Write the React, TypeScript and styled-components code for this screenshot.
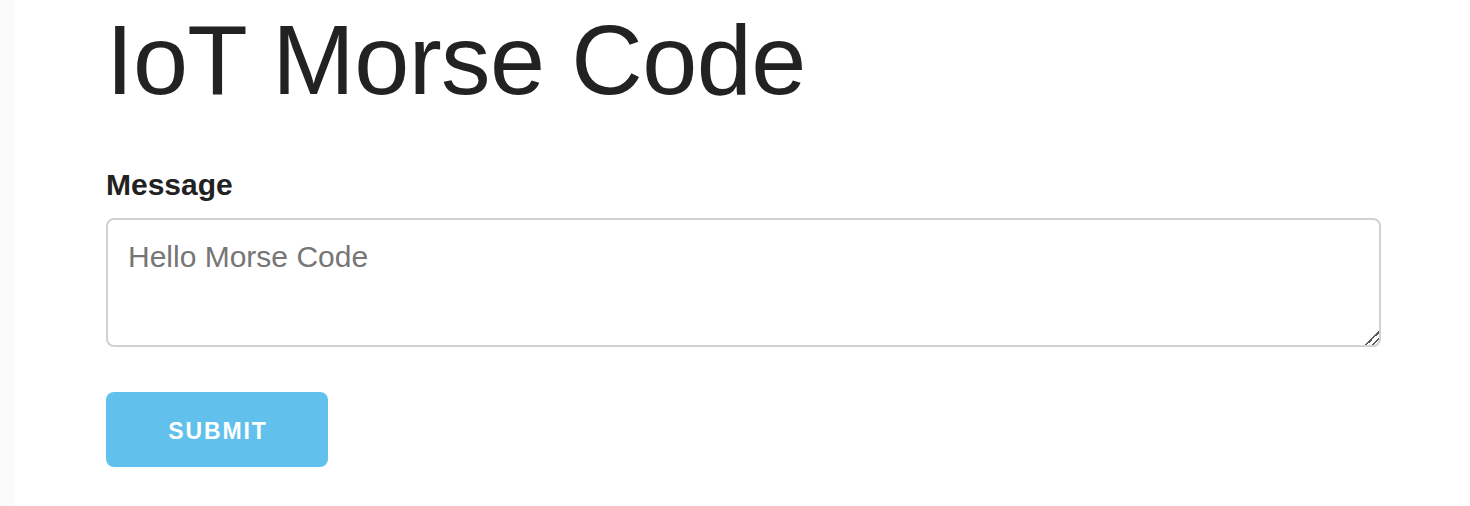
import React from "react";
import styled, { createGlobalStyle } from "styled-components";

const GlobalStyle = createGlobalStyle`
  html, body {
    margin: 0;
    padding: 0;
    background: #ffffff;
  }
  body {
    font-family: "Liberation Sans", Arial, "Helvetica Neue", Helvetica, sans-serif;
    color: #222222;
  }
  * { box-sizing: border-box; }
`;

const Page = styled.div`
  min-height: 506px;
  border-left: 15px solid #fbfbfb;
  padding: 10px 89px 0 91px;
`;

const Title = styled.h1`
  margin: 0;
  font-size: 99px;
  line-height: 100px;
  font-weight: 400;
  letter-spacing: -0.6px;
  color: #222222;
`;

const Form = styled.form`
  display: flex;
  flex-direction: column;
  align-items: flex-start;
  margin-top: 57px;
`;

const Label = styled.label`
  display: block;
  font-size: 30px;
  line-height: 36px;
  font-weight: 700;
  color: #222222;
  margin-bottom: 15px;
`;

const MessageArea = styled.textarea`
  display: block;
  width: 100%;
  height: 129px;
  padding: 17px 20px 12px;
  border: 2px solid #d1d1d1;
  border-radius: 8px;
  font-family: "Liberation Sans", Arial, sans-serif;
  font-size: 30px;
  line-height: 40px;
  color: #333333;
  background: #ffffff;
  outline: none;
  &::placeholder {
    color: #767676;
  }
  &::-webkit-resizer {
    background: linear-gradient(
      135deg,
      transparent 0 52%,
      #5a5a5a 52% 60%,
      transparent 60% 74%,
      #5a5a5a 74% 82%,
      transparent 82%
    );
  }
`;

const SubmitButton = styled.button`
  margin-top: 45px;
  width: 222px;
  height: 75px;
  border: none;
  border-radius: 8px;
  background: #61c1ec;
  color: #ffffff;
  font-family: "Liberation Sans", Arial, sans-serif;
  font-size: 23px;
  font-weight: 700;
  letter-spacing: 1.9px;
  text-transform: uppercase;
  cursor: pointer;
  padding: 4px 0 0 1.9px;
`;

export default function App() {
  return (
    <>
      <GlobalStyle />
      <Page>
        <Title>IoT Morse Code</Title>
        <Form onSubmit={(e) => e.preventDefault()}>
          <Label htmlFor="message">Message</Label>
          <MessageArea id="message" placeholder="Hello Morse Code" />
          <SubmitButton type="submit">Submit</SubmitButton>
        </Form>
      </Page>
    </>
  );
}
